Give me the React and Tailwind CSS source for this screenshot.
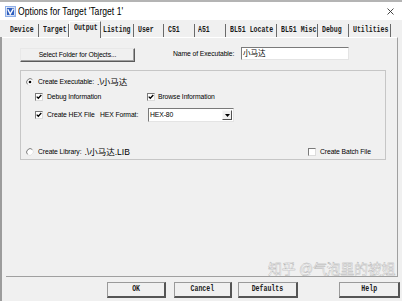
import React from "react";

const Check = ({ checked }) => (
  <span className="relative inline-block w-[8px] h-[8px] shrink-0 bg-white border border-t-[#7a7a7a] border-l-[#7a7a7a] border-r-[#dcdcdc] border-b-[#dcdcdc]">
    {checked && (
      <svg className="absolute left-0 top-0" width="6" height="6" viewBox="0 0 6 6">
        <path d="M0.7 2.6 L2.3 4.2 L5.3 1.0" fill="none" stroke="#000" strokeWidth="1.3" />
      </svg>
    )}
  </span>
);

const Radio = ({ checked }) => (
  <svg width="8" height="8" viewBox="0 0 8 8" className="shrink-0">
    <circle cx="4" cy="4" r="3.5" fill="#fff" />
    <path d="M1.53 6.47 A3.5 3.5 0 0 1 6.47 1.53" fill="none" stroke="#7a7a7a" strokeWidth="1" />
    <path d="M6.47 1.53 A3.5 3.5 0 0 1 1.53 6.47" fill="none" stroke="#e2e2e2" strokeWidth="1" />
    {checked && <circle cx="4" cy="4" r="1.3" fill="#000" />}
  </svg>
);

const Mono = ({ children, center }) => (
  <span
    className={
      center
        ? "inline-block origin-center scale-x-[0.77] font-['Liberation_Mono',monospace] font-bold text-[8.5px] leading-none whitespace-nowrap text-[#1a1a1a]"
        : "inline-block origin-left scale-x-[0.77] font-['Liberation_Mono',monospace] font-bold text-[8.5px] leading-none whitespace-nowrap text-[#1a1a1a]"
    }
  >
    {children}
  </span>
);

const T = ({ children, className = "" }) => (
  <span className={"whitespace-nowrap text-[6.8px] leading-none tracking-[-0.1px] text-black " + className}>{children}</span>
);

const tabs = [
  ["Device", "w-[35px] pl-[6px]"],
  ["Target", "w-[30px] pl-[4px]"],
  ["Output", "w-[32px] pl-[4px]", true],
  ["Listing", "w-[33px] pl-[2px]"],
  ["User", "w-[30px] pl-[4px]"],
  ["C51", "w-[31px] pl-[4px]"],
  ["A51", "w-[31px] pl-[3px]"],
  ["BL51 Locate", "w-[51px] pl-[4px]"],
  ["BL51 Misc", "w-[41px] pl-[4px]"],
  ["Debug", "w-[31px] pl-[4px]"],
  ["Utilities", "w-[42px] pl-[4px]"],
];

const BottomBtn = ({ label, className }) => (
  <div className={"h-[16px] flex items-center justify-center bg-[#f0f0f0] border-t border-l border-t-[#9a9a9a] border-l-[#9a9a9a] border-r-2 border-b-2 border-r-[#555] border-b-[#555] " + className}>
    <Mono center>{label}</Mono>
  </div>
);

export default function App() {
  return (
    <div className="relative w-[402px] h-[301px] overflow-hidden bg-[#f0f0f0] flex flex-col font-['Liberation_Sans','Noto_Sans_CJK_SC',sans-serif]">
      {/* title bar */}
      <div className="h-[20px] shrink-0 bg-white border-t-2 border-t-[#b4b4b4] flex items-center pl-[5px]">
        <svg width="11" height="11" viewBox="0 0 11 11" className="shrink-0">
          <rect x="0.5" y="0.5" width="10" height="10" fill="#2f5fbf" stroke="#8fb0e8" />
          <rect x="1.5" y="1.5" width="8" height="8" fill="none" stroke="#ffffff" strokeWidth="0.8" />
          <path d="M2.8 3.2 L5.2 8 L8.4 2.6" fill="none" stroke="#fff" strokeWidth="1.4" />
        </svg>
        <span className="ml-[2px] inline-block origin-left scale-x-[0.82] text-[10.5px] leading-none text-black whitespace-nowrap">
          Options for Target 'Target 1'
        </span>
        <svg width="7" height="7" viewBox="0 0 7 7" className="ml-auto mr-[8px] shrink-0">
          <path d="M0.5 0.5 L6.5 6.5 M6.5 0.5 L0.5 6.5" stroke="#333" strokeWidth="0.9" />
        </svg>
      </div>

      {/* tabs */}
      <div className="h-[17px] shrink-0 flex items-end pl-[4px] relative z-10">
        {tabs.map(([label, cls, sel]) =>
          sel ? (
            <div
              key={label}
              className={"h-[17px] mb-[-1px] flex items-center bg-[#f0f0f0] border-t border-l border-r border-t-white border-l-white border-r-[#6a6a6a] pb-[3px] " + cls}
            >
              <Mono>{label}</Mono>
            </div>
          ) : (
            <div key={label} className={"h-[13px] flex items-center border-r border-r-[#6a6a6a] " + cls}>
              <Mono>{label}</Mono>
            </div>
          )
        )}
      </div>

      {/* body */}
      <div className="flex-1 flex flex-col border-l-2 border-l-[#9c9c9c]">
        <div className="h-[239px] w-[396px] shrink-0 border-t border-t-white border-r border-r-[#a0a0a0] flex flex-col">
          {/* row 1 */}
          <div className="mt-[9px] ml-[18px] flex items-start">
            <div className="mt-[1px] w-[115px] h-[14px] flex items-center justify-center bg-[#f0f0f0] border border-t-[#e8e8e8] border-l-[#e8e8e8] border-r-[#5a5a5a] border-b-[#5a5a5a] shadow-[inset_-1px_-1px_0_#a0a0a0]">
              <T>Select Folder for Objects...</T>
            </div>
            <div className="ml-[38px] w-[68px] h-[14px] flex items-center">
              <T>Name of Executable:</T>
            </div>
            <div className="w-[108px] h-[13px] bg-white border border-t-[#7a7a7a] border-l-[#7a7a7a] border-r-[#e4e4e4] border-b-[#e4e4e4] flex items-center pl-[1px]">
              <span className="text-[7.5px] leading-none text-black whitespace-nowrap">小马达</span>
            </div>
          </div>

          {/* group */}
          <div className="mt-[8px] ml-[18px] w-[366px] h-[90px] border border-[#c6c6c6] flex flex-col">
            <div className="mt-[7px] ml-[5px] h-[8px] flex items-center">
              <Radio checked />
              <T className="ml-[4px]">Create Executable:</T>
              <span className="ml-[3px] text-[8.5px] leading-none text-black whitespace-nowrap">.\小马达</span>
            </div>

            <div className="mt-[7px] ml-[14px] h-[8px] flex items-center">
              <div className="w-[112px] flex items-center">
                <Check checked />
                <T className="ml-[4px]">Debug Information</T>
              </div>
              <Check checked />
              <T className="ml-[3px]">Browse Information</T>
            </div>

            <div className="mt-[7px] ml-[14px] h-[14px] flex items-center">
              <div className="w-[65px] flex items-center">
                <Check checked />
                <T className="ml-[4px]">Create HEX File</T>
              </div>
              <div className="w-[48px] flex items-center">
                <T>HEX Format:</T>
              </div>
              <div className="w-[86px] h-[14px] bg-white border border-t-[#7a7a7a] border-l-[#7a7a7a] border-r-[#e4e4e4] border-b-[#e4e4e4] flex items-center pl-[1px]">
                <T>HEX-80</T>
                <div className="ml-auto mr-[1px] w-[10px] h-[10px] bg-[#f0f0f0] border border-t-[#f8f8f8] border-l-[#f8f8f8] border-r-[#505050] border-b-[#505050] flex items-center justify-center">
                  <svg width="5" height="3" viewBox="0 0 5 3">
                    <path d="M0 0 H5 L2.5 3 Z" fill="#000" />
                  </svg>
                </div>
              </div>
            </div>

            <div className="mt-[26px] ml-[5px] h-[8px] flex items-center">
              <div className="w-[282px] flex items-center">
                <Radio />
                <T className="ml-[4px]">Create Library:</T>
                <span className="ml-[3px] text-[8.5px] leading-none text-black whitespace-nowrap">.\小马达.LIB</span>
              </div>
              <Check />
              <T className="ml-[4px]">Create Batch File</T>
            </div>
          </div>
        </div>

        <div className="ml-[4px] w-[392px] h-px bg-[#a0a0a0] shrink-0" />

        <div className="mt-[5px] ml-[105px] flex items-start">
          <BottomBtn label="OK" className="w-[59px]" />
          <BottomBtn label="Cancel" className="ml-[8px] w-[58px]" />
          <BottomBtn label="Defaults" className="ml-[6px] w-[60px]" />
          <BottomBtn label="Help" className="ml-[41px] w-[61px]" />
        </div>
      </div>

      {/* watermark */}
      <div className="absolute left-[268px] top-[262px] text-[14px] leading-none tracking-[-0.3px] text-white whitespace-nowrap [-webkit-text-stroke:0.35px_#a8a8a8]">
        知乎 @气泡里的被姐
      </div>
    </div>
  );
}
